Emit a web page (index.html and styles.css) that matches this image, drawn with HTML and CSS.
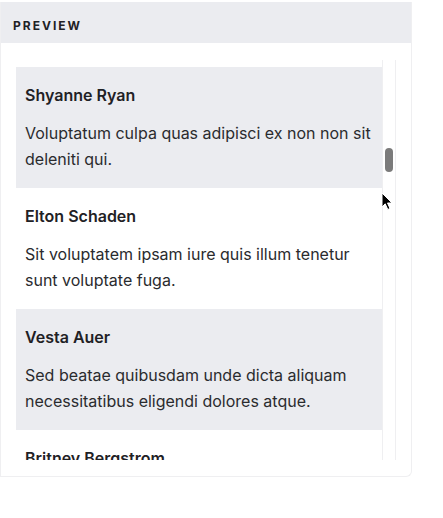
FILE: index.html
```html
<!DOCTYPE html>
<html>
<head>
<meta charset="utf-8">
<link rel="stylesheet" href="styles.css">
</head>
<body>
<div class="card">
  <div class="card-header">PREVIEW</div>
  <div class="card-body">
    <div class="scroller">
      <div class="viewport">
        <div class="list">
          <div class="item shaded">
            <h3 class="title">Shyanne Ryan</h3>
            <p class="text">Voluptatum culpa quas adipisci ex non non sit deleniti qui.</p>
          </div>
          <div class="item">
            <h3 class="title">Elton Schaden</h3>
            <p class="text">Sit voluptatem ipsam iure quis illum tenetur sunt voluptate fuga.</p>
          </div>
          <div class="item shaded">
            <h3 class="title">Vesta Auer</h3>
            <p class="text">Sed beatae quibusdam unde dicta aliquam necessitatibus eligendi dolores atque.</p>
          </div>
          <div class="item">
            <h3 class="title">Britney Bergstrom</h3>
          </div>
        </div>
      </div>
      <div class="track"><div class="thumb"></div></div>
      <svg class="cursor" width="13" height="19" viewBox="0 0 13 19"><path d="M1 1 L1 15 L4.2 11.8 L6.8 17.5 L9 16.5 L6.5 11 L11 11 Z" fill="#000" stroke="#fff" stroke-width="1"/></svg>
    </div>
  </div>
</div>
</body>
</html>
```

FILE: styles.css
```css
html, body {
  margin: 0;
  padding: 0;
  background: #ffffff;
}
body {
  font-family: Inter, "Noto Sans", sans-serif;
  color: #222;
}
.card {
  margin-top: 2px;
  width: 412px;
  box-sizing: border-box;
  border: 1px solid #efeff1;
  border-top: none;
  border-radius: 0 0 6px 0;
  overflow: hidden;
}
.card-header {
  height: 35px;
  padding-top: 6px;
  background: #ebecf0;
  display: flex;
  align-items: center;
  padding-left: 12px;
  font-size: 12px;
  font-weight: 700;
  letter-spacing: 2px;
  color: #1f2125;
}
.card-body {
  padding: 17px 15px 16px 15px;
}
.scroller {
  position: relative;
  display: flex;
  height: 400px;
}
.viewport {
  flex: 1;
  overflow: hidden;
}
.list {
  padding-top: 7px;
}
.item {
  padding: 16px 9px 16px 9px;
}
.item.shaded {
  background: #ebecf0;
}
.title {
  margin: 0 0 13px 0;
  font-size: 16px;
  line-height: 22px;
  padding-top: 1px;
  padding-bottom: 1px;
  font-weight: 600;
  color: #1f2125;
}
.text {
  margin: 0;
  font-size: 16px;
  line-height: 26px;
  color: #2a2b2e;
}
.track {
  width: 12px;
  border-left: 1px solid #efeff1;
  border-right: 1px solid #efeff1;
  position: relative;
}
.thumb {
  position: absolute;
  left: 2px;
  top: 88px;
  width: 8px;
  height: 24px;
  border-radius: 4px;
  background: #7b7b7b;
}
.cursor {
  position: absolute;
  left: 365px;
  top: 132px;
}
```
